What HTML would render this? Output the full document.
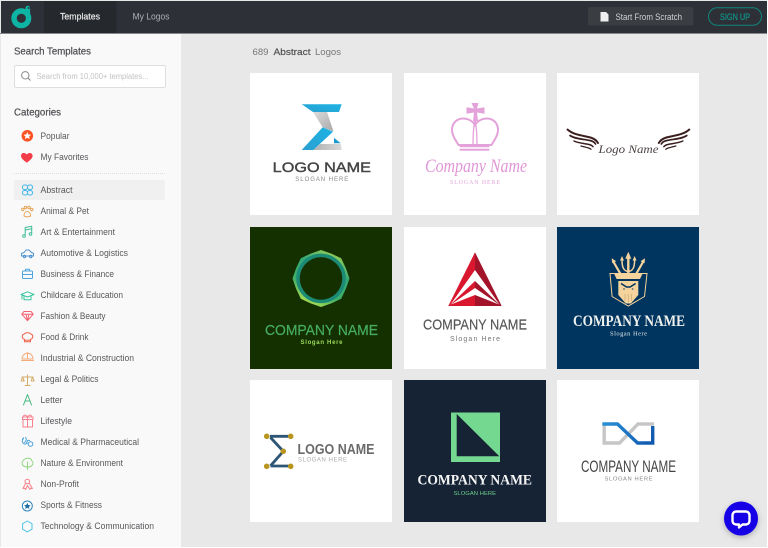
<!DOCTYPE html>
<html lang="en"><head><meta charset="utf-8"><title>Abstract Logos</title>
<style>
html,body{margin:0;padding:0;background:#fff;width:768px;height:548px;overflow:hidden}
svg{display:block}
text{font-family:"Liberation Sans",sans-serif}
.nav{font-size:9px;fill:#58585c}
.ic{fill:none;stroke-width:1;stroke-linecap:round;stroke-linejoin:round}
.med{stroke-width:.22px}
</style></head><body>
<svg xmlns="http://www.w3.org/2000/svg" width="768" height="548" viewBox="0 0 768 548">
<defs>
<linearGradient id="bl" x1="0" y1="1" x2="1" y2="0"><stop offset="0" stop-color="#2a9fd0"/><stop offset="1" stop-color="#1cb4e4"/></linearGradient>
<linearGradient id="gr" x1="0" y1="0" x2="1" y2="1"><stop offset="0" stop-color="#dcdcdc"/><stop offset="1" stop-color="#a8a8a8"/></linearGradient>
<linearGradient id="gr2" x1="0" y1="0" x2="1" y2="0"><stop offset="0" stop-color="#b0b0b0"/><stop offset="1" stop-color="#dadada"/></linearGradient>
<linearGradient id="ring" x1="0.8" y1="0" x2="0.3" y2="1"><stop offset="0" stop-color="#a8d850"/><stop offset=".35" stop-color="#35a878"/><stop offset=".7" stop-color="#3fae68"/><stop offset="1" stop-color="#b8e450"/></linearGradient>
<linearGradient id="blue9" gradientUnits="userSpaceOnUse" x1="602" y1="422" x2="654" y2="445"><stop offset="0" stop-color="#2a92d8"/><stop offset="1" stop-color="#0f55ad"/></linearGradient>
<filter id="sh" x="-30%" y="-30%" width="160%" height="160%"><feDropShadow dx="0" dy="2" stdDeviation="3" flood-color="#000" flood-opacity=".25"/></filter>
</defs>

<rect width="768" height="548" fill="#fff"/>
<rect x="0" y="0" width="767" height="547" fill="#e8e8e8"/>

<!-- header -->
<rect x="1" y="1" width="766" height="32" fill="#2d3036"/>
<rect x="0" y="33" width="767" height="1" fill="#85878a"/>
<rect x="44" y="1" width="72.500" height="32" fill="#25282d"/>
<circle cx="21.300" cy="18.300" r="7.300" fill="none" stroke="#0fb5a4" stroke-width="5.400"/>
<path d="M25.500 10V8a2.300 2.300 0 0 1 4.600 0v10h-3z" fill="#0fb5a4"/>
<circle cx="28.700" cy="8" r="1" fill="#2d3036"/>
<text x="60" y="19.500" font-size="9.500" fill="#e6e6e6" stroke="#e6e6e6" class="med" textLength="40" lengthAdjust="spacingAndGlyphs">Templates</text>
<text x="132.500" y="19.500" font-size="9.500" fill="#aeb0b2" textLength="37" lengthAdjust="spacingAndGlyphs">My Logos</text>
<rect x="588" y="7" width="105.500" height="18.500" rx="2" fill="#3a3d42"/>
<path d="M600.500 12h5.500l2.500 2.500V21.500h-8z" fill="#eee"/>
<text x="615.500" y="20" font-size="8.800" fill="#d0d1d2" textLength="66.500" lengthAdjust="spacingAndGlyphs">Start From Scratch</text>
<rect x="708.500" y="7.800" width="53" height="17.500" rx="8.750" fill="none" stroke="#12867c"/>
<text x="720" y="20" font-size="8.800" fill="#119488" class="med" stroke="#119488" textLength="30" lengthAdjust="spacingAndGlyphs">SIGN UP</text>

<!-- sidebar -->
<rect x="1" y="34" width="180" height="513" fill="#f9f9f9"/>
<text x="14" y="54.500" font-size="10.500" fill="#4e4f53" stroke="#4e4f53" class="med" textLength="77" lengthAdjust="spacingAndGlyphs">Search Templates</text>
<rect x="14.500" y="65.500" width="151" height="22" rx="1.500" fill="#fff" stroke="#dedede"/>
<circle cx="25.300" cy="75.300" r="3.700" fill="none" stroke="#8a8a8a"/>
<path d="M28 78l2.500 2.500" stroke="#8a8a8a" stroke-width="1.100"/>
<text x="36.500" y="79" font-size="8.200" fill="#c2c2c2" textLength="112" lengthAdjust="spacingAndGlyphs">Search from 10,000+ templates...</text>
<text x="14" y="115.500" font-size="10.500" fill="#4e4f53" stroke="#4e4f53" class="med" textLength="47" lengthAdjust="spacingAndGlyphs">Categories</text>

<circle cx="27.300" cy="135.800" r="5.800" fill="#fb5224"/>
<path d="M27.300 132l1.100 2.500 2.700.2-2 1.800.6 2.600-2.400-1.400-2.400 1.400.6-2.600-2-1.800 2.700-.2z" fill="#fff"/>
<path d="M26.800 162.800c-4-3-5.800-4.800-5.800-7 0-3.200 4-3.800 5.800-1.300 1.800-2.500 5.800-1.900 5.800 1.300 0 2.200-1.800 4-5.800 7z" fill="#f33d48"/>
<text class="nav" x="40.500" y="139" textLength="29" lengthAdjust="spacingAndGlyphs">Popular</text>
<text class="nav" x="40.500" y="160" textLength="48" lengthAdjust="spacingAndGlyphs">My Favorites</text>
<path d="M14 173.500H165" stroke="#ddd" stroke-dasharray="1 1"/>
<rect x="14" y="180" width="150.500" height="20" fill="#f0f0f0"/>

<text class="nav" x="40.500" y="193" textLength="32" lengthAdjust="spacingAndGlyphs">Abstract</text>
<text class="nav" x="40.500" y="214" textLength="48.500" lengthAdjust="spacingAndGlyphs">Animal &amp; Pet</text>
<text class="nav" x="40.500" y="235" textLength="74.500" lengthAdjust="spacingAndGlyphs">Art &amp; Entertainment</text>
<text class="nav" x="40.500" y="256" textLength="87.500" lengthAdjust="spacingAndGlyphs">Automotive &amp; Logistics</text>
<text class="nav" x="40.500" y="277" textLength="73.500" lengthAdjust="spacingAndGlyphs">Business &amp; Finance</text>
<text class="nav" x="40.500" y="298" textLength="82.500" lengthAdjust="spacingAndGlyphs">Childcare &amp; Education</text>
<text class="nav" x="40.500" y="319" textLength="65" lengthAdjust="spacingAndGlyphs">Fashion &amp; Beauty</text>
<text class="nav" x="40.500" y="340" textLength="48" lengthAdjust="spacingAndGlyphs">Food &amp; Drink</text>
<text class="nav" x="40.500" y="361" textLength="93.500" lengthAdjust="spacingAndGlyphs">Industrial &amp; Construction</text>
<text class="nav" x="40.500" y="382" textLength="58" lengthAdjust="spacingAndGlyphs">Legal &amp; Politics</text>
<text class="nav" x="40.500" y="403" textLength="22" lengthAdjust="spacingAndGlyphs">Letter</text>
<text class="nav" x="40.500" y="424" textLength="31.500" lengthAdjust="spacingAndGlyphs">Lifestyle</text>
<text class="nav" x="40.500" y="445" textLength="98.500" lengthAdjust="spacingAndGlyphs">Medical &amp; Pharmaceutical</text>
<text class="nav" x="40.500" y="466" textLength="82.500" lengthAdjust="spacingAndGlyphs">Nature &amp; Environment</text>
<text class="nav" x="40.500" y="487" textLength="38.500" lengthAdjust="spacingAndGlyphs">Non-Profit</text>
<text class="nav" x="40.500" y="508" textLength="61.500" lengthAdjust="spacingAndGlyphs">Sports &amp; Fitness</text>
<text class="nav" x="40.500" y="529" textLength="113.500" lengthAdjust="spacingAndGlyphs">Technology &amp; Communication</text>

<!-- category icons -->
<g class="ic" stroke="#45b8e8"><rect x="22.500" y="185" width="5" height="4.500" rx="2"/><rect x="27.500" y="185" width="5" height="4.500" rx="2"/><rect x="22.500" y="190.500" width="5" height="4.500" rx="2"/><rect x="27.500" y="190.500" width="5" height="4.500" rx="2"/></g>
<g class="ic" stroke="#e8a558"><path d="M24 216c0-3 1.500-4.500 3.300-4.500s3.300 1.500 3.300 4.500c-2 1-4.600 1-6.600 0z"/><circle cx="22.800" cy="209.500" r="1.200"/><circle cx="25.500" cy="207.500" r="1.200"/><circle cx="29" cy="207.500" r="1.200"/><circle cx="31.800" cy="209.500" r="1.200"/></g>
<g class="ic" stroke="#3fbf98"><path d="M25.200 235v-7.500l6.500-1.200V233"/><circle cx="24" cy="236" r="1.300"/><circle cx="30.500" cy="234" r="1.300"/><path d="M25.200 230l6.500-1.200"/></g>
<g class="ic" stroke="#4e93cf"><path d="M21.500 256v-2.500l2.500-1 2-2.500h3l2.500 2.500 2 .8V256z"/><circle cx="24.500" cy="256.500" r="1.200"/><circle cx="30.800" cy="256.500" r="1.200"/></g>
<g class="ic" stroke="#4ba4de"><rect x="22.500" y="271" width="10" height="7.500" rx="1"/><path d="M25.500 271v-1.800h4V271M22.500 274.500h10"/></g>
<g class="ic" stroke="#36c6a0"><path d="M21 294.500l6.500-2.700 6.500 2.700-6.500 2.500zM24 296.500v3.300h7v-3.300M22 295v4"/></g>
<g class="ic" stroke="#f4606e"><path d="M24 311.500h7l2.200 2.700-5.700 6.500-5.700-6.500zM21.800 314.200h11.400M26 314.200l1.500 6.500 1.500-6.500"/></g>
<g class="ic" stroke="#f2604a"><path d="M24.500 341.800v-2.500c-2.500-.5-3.300-4.500-.3-5.300 1-1.700 5.600-1.700 6.600 0 3 .8 2.200 4.800-.3 5.300v2.500zM24.500 340.300h6"/></g>
<g class="ic" stroke="#f5a878"><path d="M22 359c0-3 2-5.500 5.500-6 3.500.5 5.500 3 5.500 6zM27.500 353v6M21.500 360.500h12"/></g>
<g class="ic" stroke="#d4ae68"><path d="M27.500 375v10.500M25 385.500h5M22 377h11M22.500 377l-1.300 4h3l-1.700-4M32.500 377l-1.300 4h3l-1.700-4"/></g>
<g class="ic" stroke="#46b97e"><path d="M23.500 405l4-10.500 4 10.500M25 401h5"/></g>
<g class="ic" stroke="#f7808e"><rect x="23" y="419.500" width="9.500" height="7.500"/><path d="M22.500 417h10.500v2.500H22.500zM27.500 417v10M27.500 417c-2-3-5-2-3.500 0M27.500 417c2-3 5-2 3.500 0"/></g>
<g class="ic" stroke="#4aa3dc"><path d="M23.500 438c-1.500 1-1.800 4 0 5.500 1.500 1.300 3.500 0 3.500-1.500M27 442c0-1.500 1.500-2 2.500-1.500M27 442v1.500"/><circle cx="30.500" cy="444" r="2.300"/><path d="M23.500 438v1M25.500 437.500c1.200 1 1 3.500-1 5"/></g>
<g class="ic" stroke="#8fd680"><path d="M27.500 469.500v-7.500M27.500 467c-6 0-6.500-5-4-6.500.3-2.500 7.500-3.500 8 0 2.500 1.500 2 6.500-4 6.500z"/></g>
<g class="ic" stroke="#f78089"><circle cx="27.300" cy="481.500" r="2.300"/><path d="M25.500 483.500l-2.500 5 1.800-.3.700 1.300 2-4 2.500 4 .7-1.300 1.700.3-3-5"/></g>
<circle cx="27.300" cy="506" r="5" fill="#fff" stroke="#2a82b8" stroke-width="1"/><path d="M27.300 502.800l1 2.200 2.300.2-1.700 1.500.5 2.300-2.100-1.200-2.100 1.200.5-2.300-1.700-1.500 2.300-.2z" fill="#1a6ea3"/>
<g class="ic" stroke="#50c4e6" stroke-width="1.200"><path d="M27.300 521l4.700 2.700v5.500l-4.700 2.700-4.700-2.700v-5.500z"/></g>

<!-- results heading -->
<text x="252.500" y="55" font-size="9.200" fill="#777" textLength="16" lengthAdjust="spacingAndGlyphs">689</text>
<text x="273.500" y="55" font-size="9.200" fill="#555" stroke="#555" class="med" textLength="37" lengthAdjust="spacingAndGlyphs">Abstract</text>
<text x="315" y="55" font-size="9.200" fill="#777" textLength="26" lengthAdjust="spacingAndGlyphs">Logos</text>

<!-- card 1 -->
<rect x="250" y="73" width="142" height="142" fill="#fff"/>
<path d="M313 112h14l6.500 19.500-10.800-4.200z" fill="url(#gr)"/>
<path d="M301.700 104.300h40l-2.700 7.700h-26z" fill="url(#bl)"/>
<path d="M322.700 127.300l10.300 4.400-19.700 18.300h-11.600z" fill="url(#bl)"/>
<path d="M313.300 150h28.400l-1-6h-20.700z" fill="url(#gr2)"/>
<path d="M334 137.700l6.700 5.600H334z" fill="#1e9bcc"/>
<text x="272.700" y="172" font-size="14" fill="#444" stroke="#444" stroke-width=".4" textLength="98.300" lengthAdjust="spacingAndGlyphs">LOGO NAME</text>
<text x="295.300" y="181" font-size="6" fill="#8a8a8a" textLength="53" lengthAdjust="spacing">SLOGAN HERE</text>

<!-- card 2 -->
<rect x="404" y="73" width="142" height="142" fill="#fff"/>
<path d="M458.500 145c-3-5-6.500-10-6.500-15 0-7 5-11.500 11-11.500 5 0 9.500 2.500 12 6.500 2.500-4 7-6.500 12-6.500 6 0 11 4.500 11 11.500 0 5-3.500 10-6.500 15z" fill="none" stroke="#e4a2da" stroke-width="2"/>
<path d="M475 119c-1.500 8-2 17-2 26M475 119c1.500 8 2 17 2 26" fill="none" stroke="#e4a2da" stroke-width="1.300"/>
<path d="M471.500 103h7l-1.500 5.500 7.500-1.200v6.400l-7.500-1.200 1 8.500h-5l1-8.500-7.500 1.200v-6.400l7.500 1.200z" fill="#e4a2da"/>
<rect x="459.700" y="145.200" width="29.600" height="2" fill="#e4a2da"/><rect x="459.700" y="148.700" width="29.600" height="2" fill="#e4a2da"/>
<text x="425" y="172" font-size="18.500" font-style="italic" fill="#e096d6" textLength="102" lengthAdjust="spacingAndGlyphs" style="font-family:'Liberation Serif',serif">Company Name</text>
<text x="450" y="184" font-size="5.800" fill="#e4a2da" textLength="50" lengthAdjust="spacing" style="font-family:'Liberation Serif',serif">SLOGAN HERE</text>

<!-- card 3 -->
<rect x="557" y="73" width="142" height="142" fill="#fff"/>
<g fill="none" stroke="#3b1f1f" stroke-linecap="round">
<path d="M567.500 129.500c6 5.500 15 6 23 8 3.500 1 6 3 7.500 5.500" stroke-width="2"/>
<path d="M570 135.500c5 3.500 13 3.500 20 5 2.500.5 4.500 1.700 5.500 3.500" stroke-width="1.700"/>
<path d="M574 141c4 2 10 2.500 15 3.500 2 .4 3 1 4 2.200" stroke-width="1.500"/>
<path d="M581 146c3 .8 5 1.200 7.500 2 1 .3 2 .8 2.500 1.300" stroke-width="1.300"/>
<path d="M689.300 129.500c-6 5.500-15 6-23 8-3.500 1-6 3-7.500 5.500" stroke-width="2"/>
<path d="M686.800 135.500c-5 3.500-13 3.500-20 5-2.500.5-4.500 1.700-5.500 3.500" stroke-width="1.700"/>
<path d="M682.800 141c-4 2-10 2.500-15 3.500-2 .4-3 1-4 2.200" stroke-width="1.500"/>
<path d="M675.800 146c-3 .8-5 1.200-7.500 2-1 .3-2 .8-2.500 1.300" stroke-width="1.300"/>
</g>
<text x="598.500" y="153" font-size="12" font-style="italic" fill="#4a4040" textLength="60" lengthAdjust="spacingAndGlyphs" style="font-family:'Liberation Serif',serif">Logo Name</text>

<!-- card 4 -->
<rect x="250" y="227" width="142" height="142" fill="#143000"/>
<path d="M349.500 278.500L345.900 288.800 341.200 298.700 331.300 303.400 321 307 310.700 303.400 300.800 298.700 296.100 288.800 292.500 278.500 296.100 268.200 300.800 258.300 310.700 253.600 321 250 331.300 253.600 341.200 258.300 345.900 268.200z" fill="url(#ring)"/>
<circle cx="321" cy="278.400" r="23" fill="none" stroke="#1b8a76" stroke-width="3.500"/>
<circle cx="321" cy="278.400" r="21.300" fill="#143000"/>
<text x="265" y="335" font-size="14.500" fill="#46ad5f" stroke="#46ad5f" stroke-width=".2" textLength="113" lengthAdjust="spacingAndGlyphs">COMPANY NAME</text>
<text x="300.500" y="344" font-size="6" font-weight="bold" fill="#9bd95a" textLength="42" lengthAdjust="spacing">Slogan Here</text>

<!-- card 5 -->
<rect x="404" y="227" width="142" height="142" fill="#fff"/>
<path d="M475 252.300L448.300 306h26.700z" fill="#d9182f"/>
<path d="M475 252.300L501.700 306H475z" fill="#a3142a"/>
<path d="M475 270L450.500 304.500 475 281 499.500 304.500z" fill="#fff"/>
<path d="M475 288L451 304.500 475 295 499 304.500z" fill="#fff"/>
<text x="423" y="329.500" font-size="14.500" fill="#555" stroke="#555" stroke-width=".15" textLength="104" lengthAdjust="spacingAndGlyphs">COMPANY NAME</text>
<text x="450" y="341" font-size="7" fill="#777" textLength="50" lengthAdjust="spacing">Slogan Here</text>

<!-- card 6 -->
<rect x="557" y="227" width="142" height="142" fill="#003560"/>
<path d="M610 273.500h37l-2.500 23-16.200 9.500-16.200-9.500z" fill="none" stroke="#f5d39c" stroke-width="1"/>
<g fill="none" stroke="#f5d39c" stroke-linecap="round">
<path d="M628.300 256V274" stroke-width="2.400"/>
<path d="M622 260c0 8 2 11 6.300 11.500 4.300-.5 6.300-3.500 6.300-11.500" stroke-width="1.500"/>
<path d="M613 261l7.500 13M643.600 261l-7.500 13" stroke-width="2.200"/>
</g>
<g fill="#f5d39c">
<path d="M628.300 251.700l3 7h-6z"/><path d="M622 256l2 4.500h-4zM634.600 256l2 4.500h-4z"/>
<path d="M611.700 258.300l4.500 3-4 2zM645 258.300l-4.500 3 4 2z"/>
<path d="M614 273.500h28.600l-2.600 5.500h-23.400z"/>
<path d="M618.300 281h20v14l-7.500 8.500h-5l-7.500-8.500z"/>
</g>
<path d="M621 283.500l5.500 3.500h3.600l5.500-3.500M624 289.500v-1M632.600 289.500v-1" fill="none" stroke="#003560" stroke-width="1.500"/>
<path d="M625 294v7M628.300 294v8M631.600 294v7" stroke="#c9a877" stroke-width=".7"/>
<text x="573" y="326" font-size="15.500" font-weight="bold" fill="#eef0ec" textLength="112" lengthAdjust="spacingAndGlyphs" style="font-family:'Liberation Serif',serif">COMPANY NAME</text>
<text x="610" y="335.500" font-size="6.500" fill="#dfe5e6" textLength="37" lengthAdjust="spacing" style="font-family:'Liberation Serif',serif">Slogan Here</text>

<!-- card 7 -->
<rect x="250" y="380" width="142" height="142" fill="#fff"/>
<path d="M270 436.300h20M270.500 437.500l12.800 13.800-12.800 14.500M270.500 466h20" fill="none" stroke="#2d5574" stroke-width="2.800"/>
<g fill="#b8951f"><circle cx="266.700" cy="436.300" r="2.800"/><circle cx="290.700" cy="436.300" r="2.800"/><circle cx="283.300" cy="451.300" r="2.800"/><circle cx="266.700" cy="466.300" r="2.800"/><circle cx="290.700" cy="466.300" r="2.800"/></g>
<text x="297.500" y="454" font-size="14.500" font-weight="bold" fill="#6a6a6a" textLength="77" lengthAdjust="spacingAndGlyphs">LOGO NAME</text>
<text x="298" y="461.500" font-size="6" fill="#adadad" textLength="49" lengthAdjust="spacing">SLOGAN HERE</text>

<!-- card 8 -->
<rect x="404" y="380" width="142" height="142" fill="#152335"/>
<rect x="451" y="412.500" width="49" height="49.500" fill="#75d890"/>
<path d="M456.700 414l42.600 42.300H456.700z" fill="#152335"/>
<text x="417.500" y="484.500" font-size="15" font-weight="bold" fill="#f5f5f5" textLength="114.500" lengthAdjust="spacingAndGlyphs" style="font-family:'Liberation Serif',serif">COMPANY NAME</text>
<text x="453.500" y="495" font-size="5.800" fill="#6fd08c" textLength="42.500" lengthAdjust="spacing">SLOGAN HERE</text>

<!-- card 9 -->
<rect x="557" y="380" width="142" height="142" fill="#fff"/>
<path d="M604.200 424V443H619.500L638 424H654" fill="none" stroke="#c6c6c6" stroke-width="3.400"/>
<path d="M602.300 424H617.500L637.500 443H652.700V426" fill="none" stroke="url(#blue9)" stroke-width="3.400"/>
<text x="581" y="472" font-size="17" fill="#444" textLength="95" lengthAdjust="spacingAndGlyphs">COMPANY NAME</text>
<text x="604.500" y="480.500" font-size="5.800" fill="#888" textLength="48" lengthAdjust="spacing">SLOGAN HERE</text>

<!-- chat -->
<circle cx="741" cy="518.500" r="17" fill="#1400e6" filter="url(#sh)"/>
<path d="M736.500 511.500h9c2.500 0 4 1.500 4 4v5c0 2.500-1.500 4-4 4h-3l-3.500 3v-3h-2.500c-2.500 0-4-1.500-4-4v-5c0-2.500 1.500-4 4-4z" fill="none" stroke="#fff" stroke-width="2.400" stroke-linejoin="round"/>
</svg>
</body></html>
